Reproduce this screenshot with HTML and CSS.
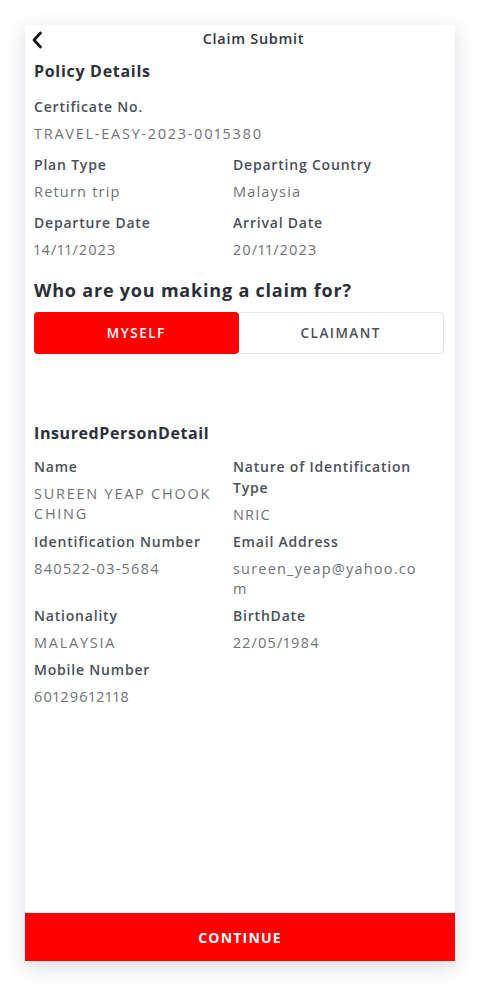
FILE: index.html
```html
<!DOCTYPE html>
<html lang="en">
<head>
    <meta charset="UTF-8">
    <meta name="viewport" content="width=device-width, initial-scale=1.0">
    <title>Claim Submit</title>
    <link rel="stylesheet" href="styles.css">
</head>
<body>

<div class="phone">
    <div class="top-bar">
        <span class="back">
            <svg width="12" height="18" viewBox="0 0 12 18"><path d="M9.5 2 L3 9 L9.5 16" fill="none" stroke="#111" stroke-width="2.7" stroke-linecap="round" stroke-linejoin="round"/></svg>
        </span>
        <span class="title">Claim Submit</span>
    </div>

    <div class="content">
        <h2 class="section-title">Policy Details</h2>

        <div class="info-grid policy">
            <div class="field full">
                <div class="label">Certificate No.</div>
                <div class="value caps">TRAVEL-EASY-2023-0015380</div>
            </div>
            <div class="field">
                <div class="label">Plan Type</div>
                <div class="value">Return trip</div>
            </div>
            <div class="field">
                <div class="label">Departing Country</div>
                <div class="value">Malaysia</div>
            </div>
            <div class="field">
                <div class="label">Departure Date</div>
                <div class="value">14/11/2023</div>
            </div>
            <div class="field">
                <div class="label">Arrival Date</div>
                <div class="value">20/11/2023</div>
            </div>
        </div>

        <h3 class="question">Who are you making a claim for?</h3>

        <div class="toggle">
            <button class="toggle-btn active">MYSELF</button>
            <button class="toggle-btn">CLAIMANT</button>
        </div>

        <h2 class="section-title insured-title">InsuredPersonDetail</h2>

        <div class="info-grid insured">
            <div class="field">
                <div class="label">Name</div>
                <div class="value caps">SUREEN YEAP CHOOK CHING</div>
            </div>
            <div class="field">
                <div class="label">Nature of Identification Type</div>
                <div class="value">NRIC</div>
            </div>
            <div class="field">
                <div class="label">Identification Number</div>
                <div class="value">840522-03-5684</div>
            </div>
            <div class="field">
                <div class="label">Email Address</div>
                <div class="value email">sureen_yeap@yahoo.com</div>
            </div>
            <div class="field">
                <div class="label">Nationality</div>
                <div class="value caps">MALAYSIA</div>
            </div>
            <div class="field">
                <div class="label">BirthDate</div>
                <div class="value">22/05/1984</div>
            </div>
            <div class="field">
                <div class="label">Mobile Number</div>
                <div class="value">60129612118</div>
            </div>
        </div>
    </div>

    <button class="continue-btn">CONTINUE</button>
</div>

</body>
</html>
```

FILE: styles.css
```css
body {
    margin: 0;
    padding: 25px;
    background: #fff;
    font-family: "Open Sans", Arial, sans-serif;
}
.phone {
    width: 430px;
    height: 936px;
    display: flex;
    flex-direction: column;
    background: #fff;
    box-shadow: 0 6px 18px rgba(40, 50, 80, 0.18);
}
.top-bar {
    position: relative;
    height: 26px;
    padding-left: 27px;
    display: flex;
    align-items: center;
    justify-content: center;
}
.back {
    position: absolute;
    left: 6px;
    top: 6px;
    display: flex;
}
.title {
    font-size: 14.5px;
    font-weight: 600;
    color: #33363f;
    letter-spacing: 0.7px;
}
.content {
    flex: 1;
    padding: 0 11px 0 9px;
}
.section-title {
    margin: 9px 0 0;
    font-size: 16px;
    line-height: 22px;
    font-weight: 700;
    color: #2c303b;
    letter-spacing: 0.7px;
}
.insured-title {
    margin-top: 68px;
    letter-spacing: 0.6px;
}
.info-grid {
    display: grid;
    grid-template-columns: 199px 190px;
    row-gap: 10px;
    margin-top: 14px;
}
.info-grid.insured {
    margin-top: 12px;
    row-gap: 6px;
}
.full {
    grid-column: 1 / 3;
}
.label {
    font-size: 14px;
    line-height: 21px;
    font-weight: 600;
    color: #4b4f5b;
    letter-spacing: 0.8px;
    margin-bottom: 7px;
}
.value {
    font-size: 14.5px;
    line-height: 20px;
    color: #707279;
    letter-spacing: 1.2px;
    font-variant-numeric: proportional-nums;
}
.value.caps {
    letter-spacing: 1.75px;
}
.email {
    word-break: break-all;
}
.question {
    margin: 18px 0 0;
    font-size: 18px;
    line-height: 24px;
    font-weight: 700;
    color: #2a2e39;
    letter-spacing: 0.8px;
}
.toggle {
    display: flex;
    margin-top: 10px;
    height: 42px;
}
.toggle-btn {
    flex: 1;
    font-family: inherit;
    font-size: 13.5px;
    font-weight: 600;
    letter-spacing: 1.5px;
    color: #4b4f5b;
    background: #fff;
    border: 1px solid #e6e7eb;
    border-radius: 0 4px 4px 0;
    border-left: none;
}
.toggle-btn.active {
    background: #fe0000;
    color: #fff;
    border: none;
    border-radius: 4px;
}
.continue-btn {
    height: 48px;
    border: none;
    background: #fe0000;
    color: #fff;
    font-family: inherit;
    font-size: 14px;
    font-weight: 700;
    letter-spacing: 1.2px;
}
```
